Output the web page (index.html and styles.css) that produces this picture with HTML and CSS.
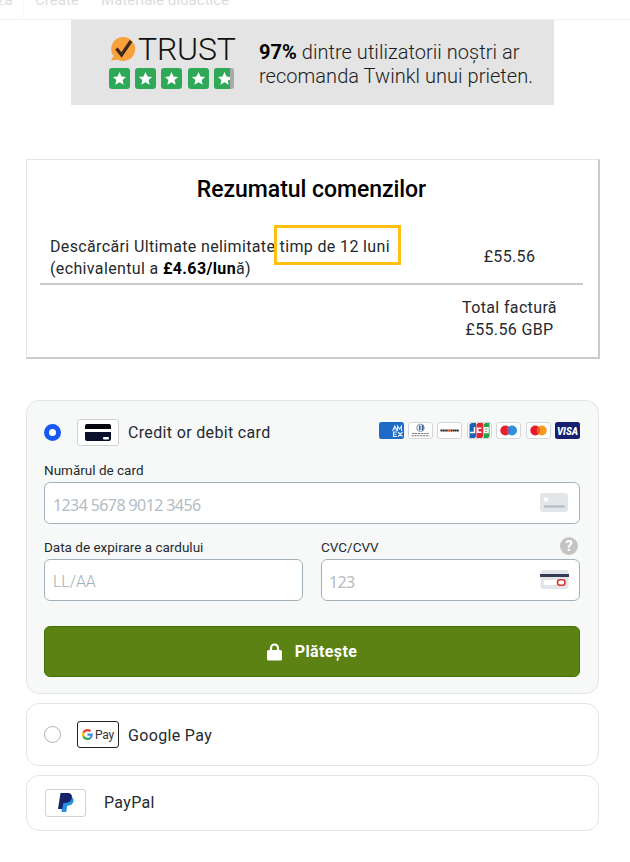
FILE: index.html
```html
<!DOCTYPE html>
<html lang="ro">
<head>
<meta charset="utf-8">
<title>Twinkl</title>
<link rel="stylesheet" href="styles.css">
</head>
<body>
<nav class="nav"><span class="nav-first">za</span><span class="nav-create">Create</span><span class="nav-mat">Materiale didactice</span></nav>

<section class="banner">
  <div class="trust">
    <div class="trust-head">
      <svg class="trust-mark" viewBox="0 0 26 26"><path d="M13 1a12 12 0 1 1-5 22.800L1 24.500l2.500-4.500A12 12 0 0 1 13 1z" fill="#f9a13a"/><path d="M6.500 12.500l5 6.500L21 5" fill="none" stroke="#40261f" stroke-width="3.200"/></svg>
      <span class="trust-word">TRUST</span>
    </div>
    <div class="stars">
      <svg class="star" viewBox="0 0 21 21"><rect width="21" height="21" rx="3" fill="#2fa957"/><path class="star-shape" d="M10.500 4l2 4.500 4.600.400-3.500 3.200 1.100 4.700-4.200-2.500-4.200 2.500 1.100-4.700-3.500-3.200 4.600-.400z"/></svg>
      <svg class="star" viewBox="0 0 21 21"><rect width="21" height="21" rx="3" fill="#2fa957"/><path class="star-shape" d="M10.500 4l2 4.500 4.600.400-3.500 3.200 1.100 4.700-4.200-2.500-4.200 2.500 1.100-4.700-3.500-3.200 4.600-.400z"/></svg>
      <svg class="star" viewBox="0 0 21 21"><rect width="21" height="21" rx="3" fill="#2fa957"/><path class="star-shape" d="M10.500 4l2 4.500 4.600.400-3.500 3.200 1.100 4.700-4.200-2.500-4.200 2.500 1.100-4.700-3.500-3.200 4.600-.400z"/></svg>
      <svg class="star" viewBox="0 0 21 21"><rect width="21" height="21" rx="3" fill="#2fa957"/><path class="star-shape" d="M10.500 4l2 4.500 4.600.400-3.500 3.200 1.100 4.700-4.200-2.500-4.200 2.500 1.100-4.700-3.500-3.200 4.600-.400z"/></svg>
      <svg class="star" viewBox="0 0 21 21"><rect width="20" height="21" rx="3" fill="#a9a9a9"/><path d="M3 0h13v21H3a3 3 0 0 1-3-3V3a3 3 0 0 1 3-3z" fill="#2fa957"/><path class="star-shape" d="M10.500 4l2 4.500 3.500.400v3.200l-2.400.500 1.100 4.200-4.200-2.500-4.200 2.500 1.100-4.700-3.500-3.200 4.600-.400z"/></svg>
    </div>
  </div>
  <p class="claim"><span class="claim-a"><b>97%</b> dintre utilizatorii noștri ar</span><br><span class="claim-b">recomanda Twinkl unui prieten.</span></p>
</section>

<section class="summary">
  <h1 class="summary-title">Rezumatul comenzilor</h1>
  <div class="row">
    <div class="item"><span class="desc">Descărcări Ultimate nelimitate <span class="term">timp de 12 luni<span class="term-box"></span></span></span><br><span class="equiv">(echivalentul a <b>£4.63/lun</b>ă)</span></div>
    <div class="price">£55.56</div>
  </div>
  <div class="total"><span>Total factură</span><span>£55.56 GBP</span></div>
</section>

<section class="card">
  <div class="method">
    <span class="radio radio-on"></span>
    <span class="logo"><svg width="26" height="17" viewBox="0 0 26 17"><path d="M2 0h22a2 2 0 0 1 2 2v3H0V2a2 2 0 0 1 2-2z" fill="#05060d"/><path d="M0 8h26v7a2 2 0 0 1-2 2H2a2 2 0 0 1-2-2z" fill="#0a0f2b"/><rect x="18" y="13" width="6" height="2.500" rx="1" fill="#fff"/></svg></span>
    <span class="method-name name-card">Credit or debit card</span>
    <div class="brands">
      <svg viewBox="0 0 25 17"><rect width="25" height="17" rx="2.500" fill="#1f69c7"/><g fill="none" stroke="#e4eefb" stroke-width="1.100"><path d="M13.500 9l2.300-5 2.300 5M14.500 7h3M18.500 9V4l2 3 2-3v5M18 10h-3.500v4.500h3.500M14.500 12.200h3M19 10l4.500 4.500M23.500 10L19 14.500"/></g></svg>
      <svg viewBox="0 0 25 17"><rect class="brand-plate" x=".5" y=".5" width="24" height="16" rx="2.500"/><circle cx="12.500" cy="5.800" r="3.800" fill="#dfe6ee" stroke="#8a9ab5"/><path d="M11.800 3.500v4.600M14 3.500c1.500 1.500 1.500 3 0 4.600" fill="none" stroke="#244a7c" stroke-width="1.200"/><path d="M4 11.500h17M3.500 13.800h18" stroke="#777" stroke-width="1.100" stroke-dasharray="2.200 .7"/></svg>
      <svg viewBox="0 0 25 17"><rect class="brand-plate" x=".5" y=".5" width="24" height="16" rx="2.500"/><path d="M3.500 8.500h7.500M14 8.500h8" stroke="#252525" stroke-width="2.200" stroke-dasharray="1.600 .3"/><circle cx="12.500" cy="8.500" r="1.500" fill="#ee5a26"/></svg>
      <svg viewBox="0 0 25 17"><rect class="brand-plate" x=".5" y=".5" width="24" height="16" rx="2.500"/><path d="M4.500 1H9v13.500L7.500 16H2.500V2.500z" fill="#1764b5"/><path d="M11 1h5v13.500L14.500 16H9.500V2.500z" fill="#df2432"/><path d="M18 1h4.500v13.500L21 16h-4.500V2.500z" fill="#26a149"/><path d="M7.500 5v5.500H3M14.500 6.200H10.800V10.300h3.700M17.500 5.800h3.500v4.800h-3.500zM17.500 8.200h3.500" fill="none" stroke="#fff" stroke-width="1.500"/></svg>
      <svg viewBox="0 0 25 17"><rect class="brand-plate" x=".5" y=".5" width="24" height="16" rx="2.500"/><circle cx="9.300" cy="8.500" r="5" fill="#e8202d"/><circle cx="16" cy="8.500" r="5" fill="#2e91dc"/><path d="M12.650 4.800a5 5 0 0 1 0 7.400 5 5 0 0 1 0-7.400" fill="#6a64b5"/></svg>
      <svg viewBox="0 0 25 17"><rect class="brand-plate" x=".5" y=".5" width="24" height="16" rx="2.500"/><circle cx="9.300" cy="8.500" r="5" fill="#e51c2a"/><circle cx="15.800" cy="8.500" r="5" fill="#f39a20"/><path d="M12.550 4.700a5 5 0 0 1 0 7.600 5 5 0 0 1 0-7.600" fill="#f05a1e"/></svg>
      <svg viewBox="0 0 25 17"><rect width="25" height="17" rx="2.500" fill="#171f70"/><text x="2" y="12.500" class="visa" textLength="21" lengthAdjust="spacingAndGlyphs">VISA</text></svg>
    </div>
  </div>
  <div class="fields">
    <div class="field wide">
      <label class="label label-number">Numărul de card</label>
      <div class="input"><span class="hint hint-number">1234 5678 9012 3456</span>
        <svg class="field-icon" width="28" height="19" viewBox="0 0 28 19"><rect width="28" height="19" rx="3" fill="#e2e6e9"/><circle cx="6" cy="6.500" r="2.300" fill="#fff"/><path d="M4 13.500h20.500" stroke="#adb8bf" stroke-width="2"/></svg></div>
    </div>
    <div class="field">
      <label class="label label-date">Data de expirare a cardului</label>
      <div class="input"><span class="hint hint-date">LL/AA</span></div>
    </div>
    <div class="field">
      <div class="label-line"><label class="label label-cvc">CVC/CVV</label><span class="help">?</span></div>
      <div class="input"><span class="hint hint-cvc">123</span>
        <svg class="field-icon" width="29" height="19" viewBox="0 0 29 19"><rect x=".5" width="28" height="19" rx="3" fill="#e2e6e9"/><path d="M0 5.500h29" stroke="#363b56" stroke-width="3"/><rect x="4" y="10" width="14" height="5" rx="1" fill="#fff"/><rect x="17.500" y="9.800" width="7.500" height="5.500" rx="2.500" fill="#fff" stroke="#d4382c" stroke-width="1.600"/></svg></div>
    </div>
  </div>
  <div class="pay">
    <svg width="15" height="18" viewBox="0 0 15 18"><path d="M4 8V5a3.500 3.500 0 0 1 7 0v3" fill="none" stroke="#fff" stroke-width="2.200"/><rect x="0" y="7" width="15" height="10.500" rx="1.500" fill="#fff"/></svg>
    <span class="pay-text">Plătește</span>
  </div>
</section>

<section class="option google">
  <span class="radio"></span>
  <span class="logo logo-google"><svg width="11" height="11" viewBox="0 0 48 48"><path fill="#ea4335" d="M24 9.500c3.500 0 6.700 1.200 9.200 3.600l6.900-6.900C35.900 2.400 30.500 0 24 0 14.600 0 6.500 5.400 2.600 13.200l8 6.200C12.400 13.700 17.700 9.500 24 9.500z"/><path fill="#4285f4" d="M47 24.500c0-1.600-.2-3.100-.4-4.500H24v9h12.900c-.6 3-2.300 5.500-4.800 7.200l7.700 6C44.400 38 47 31.800 47 24.500z"/><path fill="#fbbc05" d="M10.500 28.600a14.500 14.500 0 0 1 0-9.200l-8-6.200a24 24 0 0 0 0 21.600z"/><path fill="#34a853" d="M24 48c6.500 0 11.900-2.100 15.900-5.800l-7.700-6c-2.200 1.500-4.900 2.300-8.200 2.300-6.300 0-11.600-4.200-13.500-9.900l-8 6.200C6.500 42.600 14.600 48 24 48z"/></svg><span class="gpay">Pay</span></span>
  <span class="method-name name-google">Google Pay</span>
</section>

<section class="option paypal">
  <span class="logo logo-paypal"><svg width="16" height="19" viewBox="0 0 16 19"><path d="M5 4h9c2 1.500 2 4 .800 6-1.200 2.200-3.500 2.700-5.600 2.700L8.300 19H3.500z" fill="#2790df"/><path d="M2.500 0h7C13 0 14.500 2.200 13.800 5c-.8 3.700-3.300 4.900-7 4.900H5.400L4.200 16H0z" fill="#16246b"/></svg></span>
  <span class="method-name name-paypal">PayPal</span>
</section>
</body>
</html>
```

FILE: styles.css
```css
* { box-sizing: border-box; }
body { margin: 0; width: 630px; height: 862px; overflow: hidden; background: #fff; color: #252a2e; font-family: Roboto, "Liberation Sans", sans-serif; font-size: 16px; display: flex; flex-direction: column; }
svg { display: block; flex: none; }
.nav { height: 20px; flex: none; border-bottom: 1px solid #f2f2f2; display: flex; color: #dcdcdc; font-size: 15px; letter-spacing: .05px; line-height: 18px; white-space: nowrap; }
.nav span { margin-top: -9px; }
.nav-first { width: 27px; height: 28px; margin-left: -3px; border-right: 1px solid #f8f8f8; }
.nav-create { width: 66px; margin-left: 11px; }
.banner { width: 483px; height: 85px; flex: none; margin-left: 71px; background: #e4e4e4; display: flex; }
.trust { width: 188px; padding: 12px 0 0 38px; }
.trust-head { display: flex; height: 36px; }
.trust-mark { width: 26px; height: 26px; margin: 4px 0 0 1px; }
.trust-word { font-weight: 300; font-size: 32px; line-height: 35px; margin-left: 2px; color: #111; letter-spacing: -.2px; }
.stars { display: flex; gap: 5.2px; }
.star { width: 21px; height: 21px; }
.star-shape { fill: #fff; }
.claim { margin: 20px 0 0; font-size: 20px; line-height: 24px; font-weight: 300; letter-spacing: .04px; white-space: nowrap; color: #1c1c1c; }
.claim b { font-weight: 700; color: #000; }
.summary { width: 574px; height: 200px; flex: none; margin: 54px 0 0 26px; border: 1px solid #e4e4e4; border-right: 2px solid #cbcbcb; border-bottom: 2px solid #cbcbcb; padding: 0 15px 0 13px; letter-spacing: .36px; }
.summary-title { margin: 16px 0 0; text-align: center; font-size: 23px; line-height: 28px; font-weight: 500; letter-spacing: -.05px; color: #000; }
.row { display: flex; margin-top: 31px; height: 50px; border-bottom: 2px solid #cacaca; line-height: 22px; white-space: nowrap; }
.item { width: 396px; padding: 1px 0 0 10px; }
.item b { color: #000; }
.term { position: relative; }
.term-box { position: absolute; left: -6px; top: -12px; width: 127px; height: 40px; border: 3px solid #ffc010; }
.price { width: 147px; text-align: center; padding-top: 11px; }
.total { display: flex; flex-direction: column; width: 147px; margin: 12px 0 0 396px; text-align: center; line-height: 22px; }
.card { width: 573px; height: 294px; flex: none; margin: 41px 0 0 26px; border: 1px solid #e1e5e8; border-radius: 13px; background: #f7f9f8; padding: 17px 18px 0 17px; }
.method { display: flex; align-items: center; height: 28px; }
.radio { width: 17px; height: 17px; flex: none; border: 1px solid #a9b3bd; border-radius: 50%; background: #fff; }
.radio-on { border: 5px solid #1659f5; }
.logo { width: 42px; height: 27px; flex: none; margin-left: 16px; border: 1px solid #cfd2d4; border-radius: 3px; background: #fff; display: flex; align-items: center; justify-content: center; }
.method-name { margin-left: 9px; white-space: nowrap; letter-spacing: .34px; }
.brands { display: flex; gap: 4.4px; margin: -3px 0 0 auto; }
.brands svg { width: 25px; height: 17px; }
.brand-plate { fill: #fff; stroke: #d3d6da; }
.visa { font-family: Roboto, sans-serif; font-weight: 900; font-style: italic; font-size: 10.5px; fill: #fff; }
.fields { display: grid; grid-template-columns: 259px 259px; gap: 12px 18px; margin-top: 14px; }
.wide { grid-column: 1 / 3; }
.field { height: 65px; }
.label { display: block; font-size: 13.5px; line-height: 21px; height: 22px; white-space: nowrap; }
.label-line { display: flex; justify-content: space-between; height: 22px; }
.help { width: 18px; height: 18px; margin-right: 2px; border-radius: 50%; background: #c4c4c4; color: #fff; font-size: 15px; font-weight: 700; line-height: 18px; text-align: center; }
.input { height: 42px; border: 1px solid #a5b1ba; border-radius: 6px; background: #fff; display: flex; align-items: center; justify-content: space-between; padding: 3px 10px 0 8px; color: #b3bdc4; }
.hint-number, .hint-cvc { font-family: "Noto Sans", sans-serif; font-size: 16px; letter-spacing: -.6px; }
.hint-cvc { margin-left: -1px; }
.hint-date { font-weight: 300; letter-spacing: -.1px; color: #a3afb7; }
.field-icon { margin-top: -4px; }
.wide .field-icon { margin-right: 1px; }
.pay { height: 51px; margin-top: 24px; border: 1px solid #3f7504; border-radius: 6px; background: #5b8213; display: flex; align-items: center; justify-content: center; gap: 13px; color: #fff; font-weight: 700; letter-spacing: .38px; }
.option { width: 573px; flex: none; margin-left: 26px; border: 1px solid #e1e5e8; border-radius: 13px; display: flex; align-items: center; padding-left: 17px; }
.google { height: 63px; margin-top: 9px; }
.name-google { padding-top: 1px; }
.paypal { height: 56px; margin-top: 9px; padding-bottom: 1px; }
.logo-google { border: 1px solid #222; gap: 2px; }
.gpay { font-size: 12px; letter-spacing: -.2px; line-height: 14px; color: #333; }
.logo-paypal { width: 41px; height: 28px; margin-left: 1px; }
.name-paypal { margin-left: 18px; }
```
